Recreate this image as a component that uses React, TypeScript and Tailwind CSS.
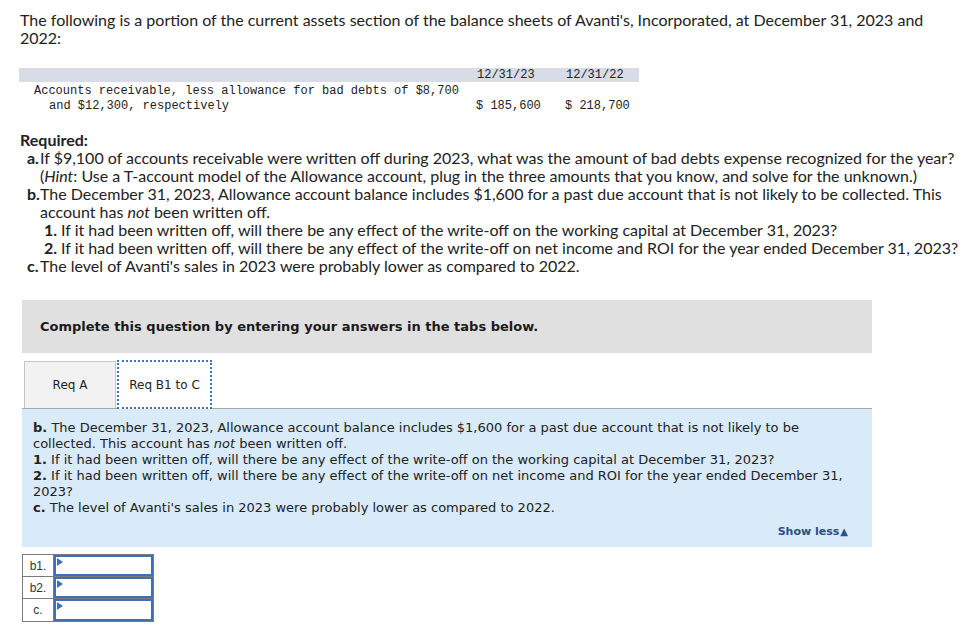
import React from "react";

const sans = "font-['Lato','Open_Sans',sans-serif]";
const verdana = "font-['Verdana','DejaVu_Sans',sans-serif]";
const mono = "font-['Liberation_Mono','DejaVu_Sans_Mono',monospace]";

function AnswerRow({ label }: { label: string }) {
  return (
    <div className="flex h-[22px] border-b border-[#7a7a7a] last:border-b-0">
      <div className="flex w-[31px] items-center justify-center border-r border-[#7a7a7a] font-['Liberation_Sans',sans-serif] text-[12px] text-[#333]">
        {label}
      </div>
      <div className="relative flex-1 border-2 border-[#3f70b3] bg-white">
        <span className="absolute left-[1px] top-[1px] h-0 w-0 border-y-[4px] border-l-[6px] border-y-transparent border-l-[#3f70b3]" />
      </div>
    </div>
  );
}

export default function App() {
  return (
    <div className={`${sans} min-h-[629px] w-[968px] bg-white text-[16px] leading-[18px] text-[#222]`}>
      {/* intro */}
      <div className="pl-[20px] pt-[11px]">
        <div className="whitespace-nowrap">
          The following is a portion of the current assets section of the balance sheets of Avanti's, Incorporated, at December 31, 2023 and
        </div>
        <div>2022:</div>
      </div>

      {/* balance sheet extract */}
      <div className={`${mono} ml-[19px] mt-[21px] w-[620px] text-[12px] leading-[15px] text-[#222]`}>
        <div className="flex h-[14px] bg-[#d8dce6] leading-[14px]">
          <div className="w-[451px]" />
          <div className="w-[89px] pl-[7px]">12/31/23</div>
          <div className="w-[80px] pl-[7px]">12/31/22</div>
        </div>
        <div className="flex">
          <div className="w-[451px] pt-[2px]">
            <div className="pl-[15px]">Accounts receivable, less allowance for bad debts of $8,700</div>
            <div className="pl-[30px]">and $12,300, respectively</div>
          </div>
          <div className="flex w-[89px] items-end pl-[6px]">$ 185,600</div>
          <div className="flex w-[80px] items-end pl-[6px]">$ 218,700</div>
        </div>
      </div>

      {/* required */}
      <div className="mt-[17px] pl-[20px]">
        <div className="font-bold">Required:</div>
        <div className="flex pl-[7px]">
          <span className="w-[13px] shrink-0 font-bold">a.</span>
          <div>
            <div className="whitespace-nowrap">
              If $9,100 of accounts receivable were written off during 2023, what was the amount of bad debts expense recognized for the year?
            </div>
            <div className="whitespace-nowrap">
              (<i>Hint</i>: Use a T-account model of the Allowance account, plug in the three amounts that you know, and solve for the unknown.)
            </div>
          </div>
        </div>
        <div className="flex pl-[7px]">
          <span className="w-[13px] shrink-0 font-bold">b.</span>
          <div>
            <div className="whitespace-nowrap">
              The December 31, 2023, Allowance account balance includes $1,600 for a past due account that is not likely to be collected. This
            </div>
            <div>
              account has <i>not</i> been written off.
            </div>
            <div className="flex">
              <span className="w-[17px] shrink-0 text-right font-bold">1.</span>
              <span className="whitespace-nowrap pl-[4px]">
                If it had been written off, will there be any effect of the write-off on the working capital at December 31, 2023?
              </span>
            </div>
            <div className="flex">
              <span className="w-[17px] shrink-0 text-right font-bold">2.</span>
              <span className="whitespace-nowrap pl-[4px]">
                If it had been written off, will there be any effect of the write-off on net income and ROI for the year ended December 31, 2023?
              </span>
            </div>
          </div>
        </div>
        <div className="flex pl-[7px]">
          <span className="w-[13px] shrink-0 font-bold">c.</span>
          <div>The level of Avanti's sales in 2023 were probably lower as compared to 2022.</div>
        </div>
      </div>

      {/* question box */}
      <div className={`${verdana} ml-[22px] mt-[25px] w-[850px]`}>
        <div className="flex h-[53px] items-center bg-[#e0e0e0] pl-[18px] text-[13px] font-bold text-[#1a1a1a]">
          Complete this question by entering your answers in the tabs below.
        </div>

        <div className="mt-[7px] flex items-end border-b border-[#a8a8a8] pl-[2px]">
          <div className="flex h-[47px] w-[92px] items-center justify-center border border-b-0 border-[#c4c4c4] bg-[#f2f2f2] text-[12px] text-[#222]">
            Req A
          </div>
          <div className="-mb-px ml-[1px] flex h-[49px] w-[95px] items-center justify-center border-2 border-dotted border-[#3f73b8] bg-white text-[12px] text-[#222]">
            Req B1 to C
          </div>
        </div>

        <div className="bg-[#d9eaf8] pb-[7px] pl-[11px] pr-[24px] pt-[11px] text-[13px] leading-[16px] text-[#222]">
          <div className="whitespace-nowrap">
            <b>b.</b> The December 31, 2023, Allowance account balance includes $1,600 for a past due account that is not likely to be
          </div>
          <div>
            collected. This account has <i>not</i> been written off.
          </div>
          <div className="whitespace-nowrap">
            <b>1.</b> If it had been written off, will there be any effect of the write-off on the working capital at December 31, 2023?
          </div>
          <div className="whitespace-nowrap">
            <b>2.</b> If it had been written off, will there be any effect of the write-off on net income and ROI for the year ended December 31,
          </div>
          <div>2023?</div>
          <div>
            <b>c.</b> The level of Avanti's sales in 2023 were probably lower as compared to 2022.
          </div>
          <div className="mt-[8px] flex justify-end text-[11px] font-bold leading-[16px] text-[#2b4f82]">
            Show less<span className="ml-[1px] text-[10px]">▲</span>
          </div>
        </div>

        <div className="mt-[7px] w-[132px] border border-[#7a7a7a]">
          <AnswerRow label="b1." />
          <AnswerRow label="b2." />
          <AnswerRow label="c." />
        </div>
      </div>
    </div>
  );
}
